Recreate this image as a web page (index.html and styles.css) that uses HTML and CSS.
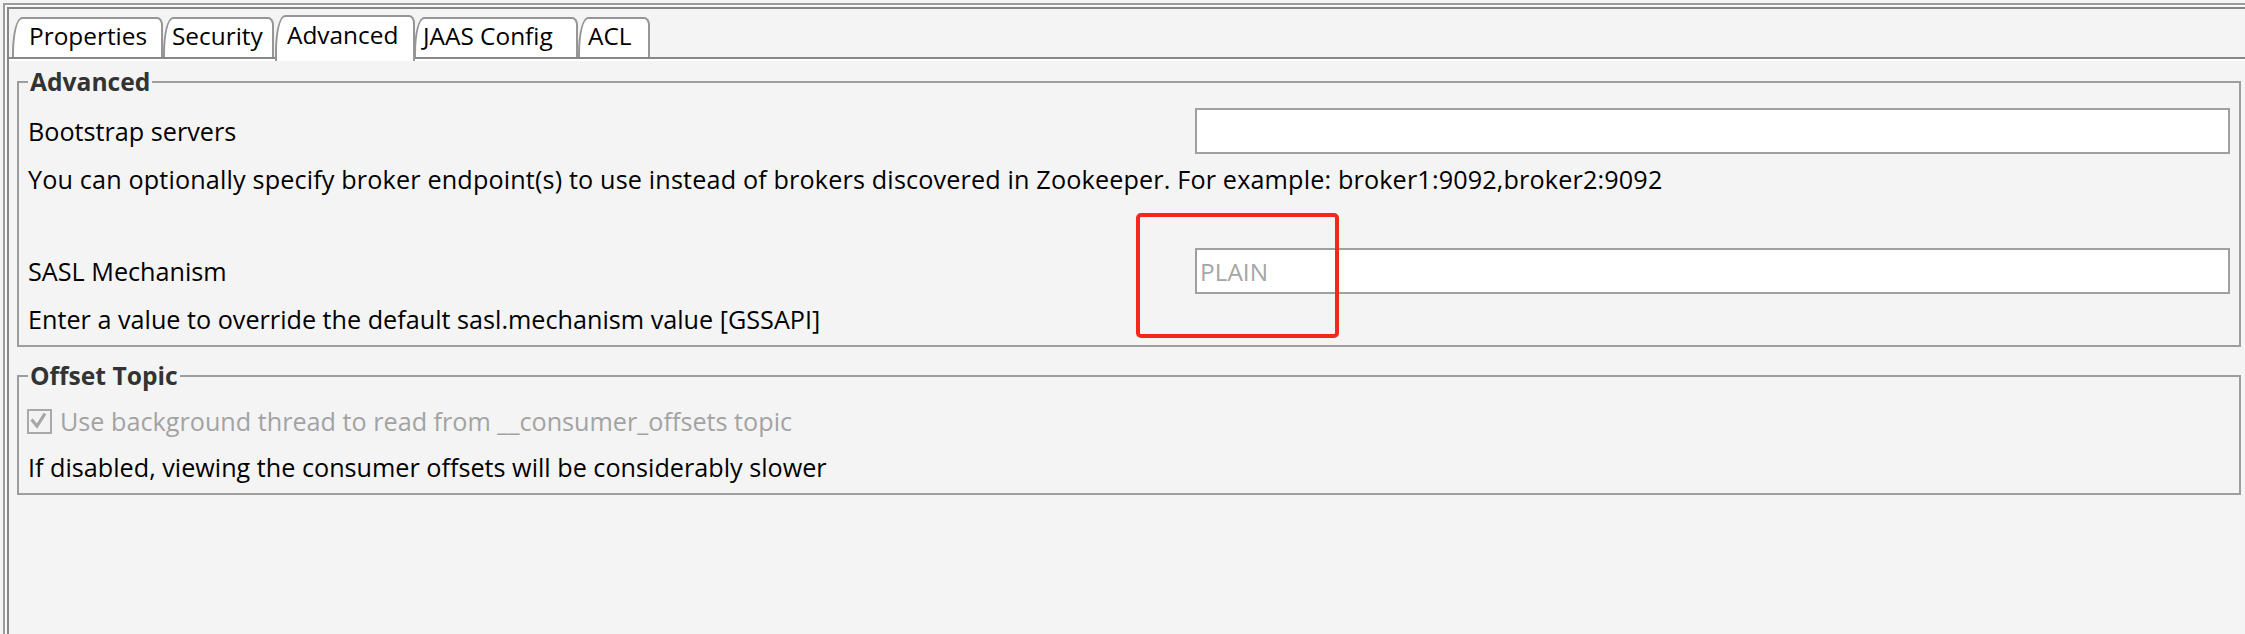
FILE: index.html
```html
<!DOCTYPE html>
<html lang="en">
<head>
<meta charset="utf-8">
<title>Advanced</title>
<link rel="stylesheet" href="styles.css">
</head>
<body>
<div class="frame">
  <div class="inner">
    <div class="tabbar">
      <div class="tab tab-properties">Properties</div>
      <div class="tab tab-security">Security</div>
      <div class="tab tab-advanced selected">Advanced</div>
      <div class="tab tab-jaas">JAAS Config</div>
      <div class="tab tab-acl">ACL</div>
    </div>
    <div class="panel">
      <fieldset class="group group-advanced">
        <legend>Advanced</legend>
        <div class="row">
          <span class="label">Bootstrap servers</span>
          <input class="field" type="text" value="">
        </div>
        <div class="help help-wide">You can optionally specify broker endpoint(s) to use instead of brokers discovered in Zookeeper. For example: broker1:9092,broker2:9092</div>
        <div class="row row-spaced">
          <span class="label">SASL Mechanism</span>
          <input class="field field-muted" type="text" value="PLAIN">
        </div>
        <div class="help">Enter a value to override the default sasl.mechanism value [GSSAPI]</div>
      </fieldset>
      <fieldset class="group group-offset">
        <legend>Offset Topic</legend>
        <div class="check-row">
          <svg class="checkbox" width="25" height="25" viewBox="0 0 25 25" aria-hidden="true">
            <rect x="1" y="1" width="23" height="23" fill="#f3f3f3" stroke="#a9a9a9" stroke-width="2"/>
            <polyline points="4.5,10.5 10,17 18,4.5" fill="none" stroke="#a6a6a6" stroke-width="3.2" stroke-linejoin="miter"/>
          </svg>
          <span class="check-label">Use background thread to read from __consumer_offsets topic</span>
        </div>
        <div class="help help-offset">If disabled, viewing the consumer offsets will be considerably slower</div>
      </fieldset>
    </div>
  </div>
</div>
<div class="highlight"></div>
</body>
</html>
```
FILE: styles.css
```css
html, body {
  margin: 0;
  padding: 0;
}
body {
  background: #f4f4f4;
  font-family: "Open Sans", "Noto Sans", sans-serif;
  font-size: 25.2px;
  color: #000;
  width: 2245px;
  height: 634px;
  overflow: hidden;
  position: relative;
}
.frame {
  margin: 3px 0 0 3px;
  border-top: 2px solid #9c9c9c;
  border-left: 2px solid #9c9c9c;
  background: #f9f9f9;
  height: 629px;
}
.inner {
  margin: 2px 0 0 2px;
  border-top: 2px solid #878787;
  border-left: 2px solid #878787;
  background: #f4f4f4;
  height: 625px;
}
.tabbar {
  height: 48px;
  display: flex;
  align-items: flex-end;
  padding-left: 3px;
}
.tab {
  box-sizing: border-box;
  height: 40px;
  border: 2px solid #969696;
  border-bottom: none;
  border-radius: 10px 6px 0 0 / 36px 8px 0 0;
  background: #fff;
  font-size: 24.4px;
  line-height: 30px;
  padding-top: 2px;
  white-space: nowrap;
  color: #000;
}
.tab-properties { width: 151px; padding-left: 15px; }
.tab-security { width: 111px; padding-left: 7px; }
.tab-advanced { width: 140px; padding-left: 10px; }
.tab-jaas { width: 164px; padding-left: 7px; margin-left: -1px; }
.tab-acl { width: 72px; padding-left: 8px; }
.tab.selected {
  height: 46px;
  margin-bottom: -4px;
  padding-top: 3px;
  position: relative;
  z-index: 2;
  margin-left: 1px;
}
.panel {
  border-top: 2px solid #878787;
  box-shadow: inset 0 2px 0 #fff;
  padding: 0 4px 0 8px;
}
.group {
  margin: 9px 0 0;
  border: 2px solid #9d9d9d;
  padding: 12px 9px 9px;
  min-width: 0;
}
.group legend {
  padding: 0 2px;
  font-weight: 700;
  font-size: 24.6px;
  line-height: 28px;
  color: #333;
}
.group-offset {
  margin-top: 15px;
  padding-top: 14px;
}
.row {
  display: grid;
  grid-template-columns: 1167px 1fr;
  align-items: center;
}
.row-spaced {
  margin-top: 52px;
}
.label {
  line-height: 34px;
}
.field {
  box-sizing: border-box;
  width: 100%;
  height: 46px;
  margin: 0;
  border: 2px solid #a0a0a0;
  border-radius: 0;
  background: #fff;
  font-family: "Open Sans", "Noto Sans", sans-serif;
  font-size: 24.4px;
  padding: 0 3px;
  color: #000;
  outline: none;
}
.field-muted {
  color: #a6a6a6;
}
.help {
  line-height: 34px;
  margin-top: 8px;
  white-space: nowrap;
}
.help-wide {
  letter-spacing: 0.15px;
}
.check-row {
  display: flex;
  align-items: center;
  height: 34px;
  margin-left: -1px;
}
.checkbox {
  display: block;
  flex: none;
}
.check-label {
  margin-left: 8px;
  color: #a3a3a3;
  white-space: nowrap;
  line-height: 34px;
}
.help-offset {
  margin-top: 12px;
}
.highlight {
  position: absolute;
  left: 1136px;
  top: 213px;
  width: 203px;
  height: 125px;
  box-sizing: border-box;
  border: 4px solid #f4271b;
  border-radius: 5px;
}
```
